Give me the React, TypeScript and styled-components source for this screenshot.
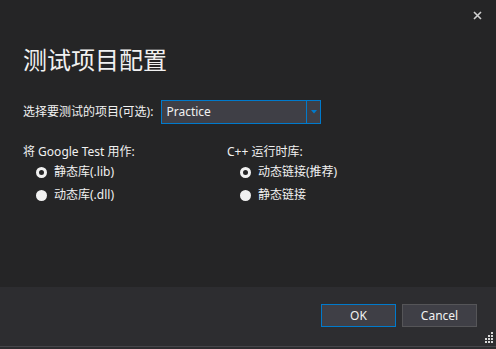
import React, { useState } from 'react'
import styled, { createGlobalStyle } from 'styled-components'

const GlobalStyle = createGlobalStyle`
  html, body {
    margin: 0;
    padding: 0;
    background: #252526;
  }
  body {
    font-family: "Segoe UI", "Noto Sans", "Noto Sans CJK SC", sans-serif;
    color: #f1f1f1;
  }
`

const Dialog = styled.div`
  width: 496px;
  height: 349px;
  display: flex;
  flex-direction: column;
  background: #252526;
  overflow: hidden;
`

const TopBar = styled.div`
  display: flex;
  justify-content: flex-end;
  height: 30px;
  padding-right: 9px;
`

const CloseButton = styled.button`
  width: 20px;
  height: 20px;
  margin-top: 5px;
  border: none;
  background: transparent;
  padding: 0;
  display: flex;
  align-items: center;
  justify-content: center;
  cursor: pointer;
`

const Body = styled.div`
  flex: 1;
  display: flex;
  flex-direction: column;
  padding: 0 23px;
`

const Title = styled.h1`
  margin: 13px 0 0;
  font-family: "Noto Sans CJK SC", sans-serif;
  font-size: 24px;
  line-height: 32px;
  font-weight: 400;
  color: #f1f1f1;
`

const ProjectRow = styled.div`
  display: flex;
  align-items: center;
  gap: 8px;
  margin-top: 25px;
`

const Label = styled.span`
  font-size: 12px;
  line-height: 16px;
  color: #f1f1f1;
  white-space: nowrap;
`

const Combo = styled.div`
  width: 160px;
  height: 24px;
  box-sizing: border-box;
  border: 1px solid #007acc;
  background: #3f3f46;
  display: flex;
  align-items: stretch;
`

const ComboText = styled.span`
  flex: 1;
  padding-left: 4px;
  font-size: 12px;
  line-height: 22px;
  color: #f1f1f1;
`

const ComboArrow = styled.span`
  width: 13px;
  border-left: 1px solid #007acc;
  display: flex;
  align-items: center;
  justify-content: center;
`

const Groups = styled.div`
  display: grid;
  grid-template-columns: 204px 1fr;
  margin-top: 20px;
`

const Group = styled.div`
  display: flex;
  flex-direction: column;
`

const Options = styled.div`
  display: flex;
  flex-direction: column;
  gap: 7px;
  margin-top: 4px;
  padding-left: 13px;
`

const OptionRow = styled.label`
  display: flex;
  align-items: center;
  gap: 7px;
  height: 16px;
  cursor: pointer;
`

const RadioDot = styled.span<{ $checked: boolean }>`
  width: 11px;
  height: 11px;
  box-sizing: border-box;
  border-radius: 50%;
  background: ${(p) => (p.$checked ? '#252526' : '#f1f1f1')};
  border: ${(p) => (p.$checked ? '3px solid #f1f1f1' : 'none')};
  flex-shrink: 0;
`

const Footer = styled.div`
  height: 59px;
  background: #2d2d30;
  display: flex;
  justify-content: flex-end;
  align-items: flex-start;
  gap: 6px;
  padding: 17px 19px 0 0;
  box-sizing: border-box;
  position: relative;
`

const DialogButton = styled.button<{ $primary?: boolean }>`
  width: 75px;
  height: 23px;
  box-sizing: border-box;
  border: 1px solid ${(p) => (p.$primary ? '#007acc' : '#555558')};
  background: #3f3f46;
  color: #f1f1f1;
  font-family: "Segoe UI", "Noto Sans", sans-serif;
  font-size: 12px;
  padding: 0;
  cursor: pointer;
`

const Grip = styled.svg`
  position: absolute;
  right: 2px;
  bottom: 3px;
`

const BottomEdge = styled.div`
  height: 3px;
  background: #2d2d30;
  border-top: 1px solid #46464a;
  box-sizing: border-box;
`

type Choice = { label: string }

function RadioGroup({ title, items, value, onChange }: {
  title: string
  items: Choice[]
  value: number
  onChange: (i: number) => void
}) {
  return (
    <Group>
      <Label>{title}</Label>
      <Options>
        {items.map((it, i) => (
          <OptionRow key={it.label} onClick={() => onChange(i)}>
            <RadioDot $checked={value === i} />
            <Label>{it.label}</Label>
          </OptionRow>
        ))}
      </Options>
    </Group>
  )
}

export default function App() {
  const [libType, setLibType] = useState(0)
  const [runtime, setRuntime] = useState(0)

  return (
    <Dialog>
      <GlobalStyle />
      <TopBar>
        <CloseButton aria-label="关闭">
          <svg width="9" height="9" viewBox="0 0 9 9">
            <path d="M1 1L8 8M8 1L1 8" stroke="#d0d0d0" strokeWidth="1.6" />
          </svg>
        </CloseButton>
      </TopBar>
      <Body>
        <Title>测试项目配置</Title>
        <ProjectRow>
          <Label>选择要测试的项目(可选):</Label>
          <Combo>
            <ComboText>Practice</ComboText>
            <ComboArrow>
              <svg width="6" height="4" viewBox="0 0 6 4">
                <path d="M0 0H6L3 3.5Z" fill="#007acc" />
              </svg>
            </ComboArrow>
          </Combo>
        </ProjectRow>
        <Groups>
          <RadioGroup
            title="将 Google Test 用作:"
            items={[{ label: '静态库(.lib)' }, { label: '动态库(.dll)' }]}
            value={libType}
            onChange={setLibType}
          />
          <RadioGroup
            title="C++ 运行时库:"
            items={[{ label: '动态链接(推荐)' }, { label: '静态链接' }]}
            value={runtime}
            onChange={setRuntime}
          />
        </Groups>
      </Body>
      <Footer>
        <DialogButton $primary>OK</DialogButton>
        <DialogButton>Cancel</DialogButton>
        <Grip width="11" height="11" viewBox="0 0 11 11">
          {[
            [8, 0], [8, 3], [5, 3], [8, 6], [5, 6], [2, 6], [8, 9], [5, 9], [2, 9],
          ].map(([x, y]) => (
            <rect key={`${x}-${y}`} x={x} y={y} width="2" height="2" fill="#d8d8d8" />
          ))}
        </Grip>
      </Footer>
      <BottomEdge />
    </Dialog>
  )
}
